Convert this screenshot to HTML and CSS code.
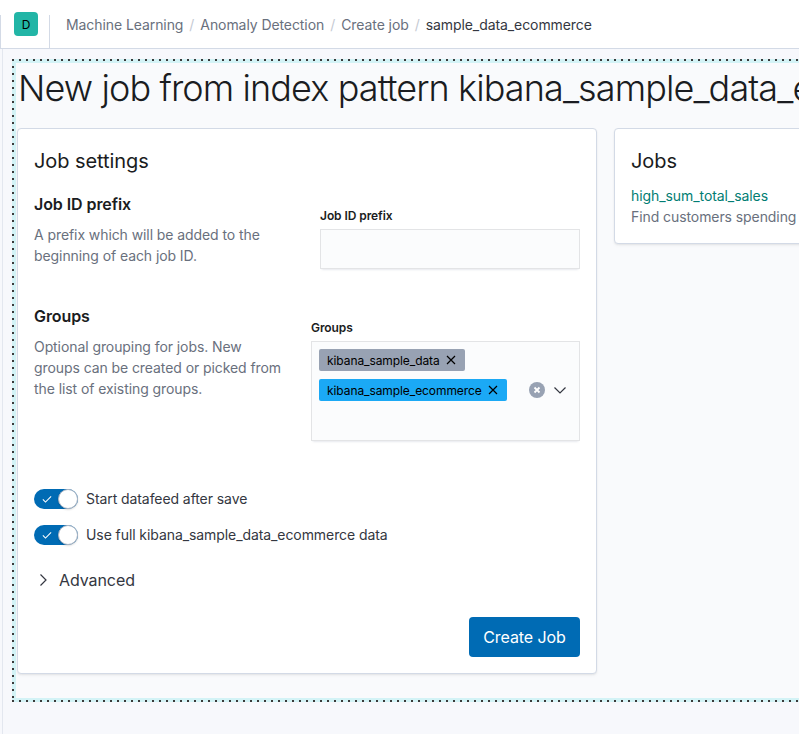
FILE: index.html
```html
<!DOCTYPE html>
<html>
<head>
<meta charset="utf-8">
<link rel="stylesheet" href="styles.css">
</head>
<body>
<div class="app">
  <header class="header">
    <div class="avatar-section"><span class="avatar">D</span></div>
    <nav class="crumbs">
      <span class="crumb">Machine Learning</span><span class="sep">/</span>
      <span class="crumb">Anomaly Detection</span><span class="sep">/</span>
      <span class="crumb">Create job</span><span class="sep">/</span>
      <span class="crumb last">sample_data_ecommerce</span>
    </nav>
  </header>
  <main class="main">
    <div class="focus-box">
      <div class="page">
        <h1 class="page-title">New job from index pattern kibana_sample_data_ecommerce</h1>
        <div class="cards">
          <section class="card settings">
            <h2 class="card-title">Job settings</h2>
            <div class="row row-first">
              <div class="desc">
                <h3 class="desc-title">Job ID prefix</h3>
                <p class="desc-text">A prefix which will be added to the<br>beginning of each job ID.</p>
              </div>
              <div class="field field-narrow">
                <label class="label">Job ID prefix</label>
                <div class="input"></div>
              </div>
            </div>
            <div class="row row-second">
              <div class="desc">
                <h3 class="desc-title">Groups</h3>
                <p class="desc-text">Optional grouping for jobs. New<br>groups can be created or picked from<br>the list of existing groups.</p>
              </div>
              <div class="field field-wide">
                <label class="label">Groups</label>
                <div class="combo">
                  <div class="tags">
                    <span class="tag tag-gray">kibana_sample_data<svg class="tag-x" viewBox="0 0 10 10"><path d="M1 1l8 8M9 1l-8 8"/></svg></span>
                    <span class="tag tag-cyan">kibana_sample_ecommerce<svg class="tag-x" viewBox="0 0 10 10"><path d="M1 1l8 8M9 1l-8 8"/></svg></span>
                  </div>
                  <div class="combo-icons">
                    <span class="clear"><svg viewBox="0 0 16 16"><path d="M5.5 5.5l5 5M10.5 5.5l-5 5"/></svg></span>
                    <svg class="chev-down" viewBox="0 0 16 16"><path d="M2.5 5.5L8 11l5.5-5.5"/></svg>
                  </div>
                </div>
              </div>
            </div>
            <div class="switch-row first-switch">
              <span class="switch"><svg class="check" viewBox="0 0 16 16"><path d="M2.5 8.5l3.5 3.5 7.5-7.5"/></svg><span class="knob"></span></span>
              <span class="switch-label">Start datafeed after save</span>
            </div>
            <div class="switch-row">
              <span class="switch"><svg class="check" viewBox="0 0 16 16"><path d="M2.5 8.5l3.5 3.5 7.5-7.5"/></svg><span class="knob"></span></span>
              <span class="switch-label">Use full kibana_sample_data_ecommerce data</span>
            </div>
            <div class="advanced">
              <svg class="chev-right" viewBox="0 0 16 16"><path d="M5.5 2.5L11 8l-5.5 5.5"/></svg>
              <span>Advanced</span>
            </div>
            <div class="actions">
              <button class="btn">Create Job</button>
            </div>
          </section>
          <section class="card jobs">
            <h2 class="card-title">Jobs</h2>
            <div class="job-name">high_sum_total_sales</div>
            <div class="job-desc">Find customers spending an unusually high amount in an hour</div>
          </section>
        </div>
      </div>
    </div>
  </main>
</div>
</body>
</html>
```
FILE: styles.css
```css
* { box-sizing: border-box; }
html, body { margin: 0; padding: 0; }
body {
  font-family: Inter, "Noto Sans", sans-serif;
  color: #343741;
  background: #F7F8FC;
  width: 799px;
  height: 734px;
  overflow: hidden;
  letter-spacing: -0.005em;
}
.app { width: 1400px; }
.header {
  height: 49px;
  background: #fff;
  border-bottom: 1px solid #D3DAE6;
  display: flex;
  align-items: center;
}
.avatar-section {
  width: 50px;
  height: 48px;
  display: flex;
  align-items: center;
  justify-content: center;
  background: linear-gradient(#D3DAE6, #D3DAE6) right 15px / 1px 33px no-repeat,
              linear-gradient(#D3DAE6, #D3DAE6) left 15px / 1px 33px no-repeat;
}
.avatar {
  width: 24px; height: 24px;
  border-radius: 4px;
  background: #22B5A6;
  color: #000;
  font-size: 12px;
  display: flex; align-items: center; justify-content: center;
  margin-left: 2px;
}
.crumbs {
  margin-left: 16px;
  font-size: 14px;
  display: flex;
  align-items: center;
  color: #69707D;
}
.sep { color: #C5CAD3; margin: 0 6px; }
.crumb.last { color: #343741; }

.main {
  margin-left: 2px;
  border-left: 1px solid #E3E7EF;
  padding: 10px 0 0 9px;
  height: 685px;
}
.focus-box {
  width: 1300px;
  padding: 4px;
  background:
    repeating-linear-gradient(90deg, #3a3a3a 0 2px, transparent 2px 7px) left top / 100% 2px no-repeat,
    repeating-linear-gradient(90deg, #3a3a3a 0 2px, transparent 2px 7px) left bottom / 100% 2px no-repeat,
    repeating-linear-gradient(180deg, #3a3a3a 0 2px, transparent 2px 7px) left top / 2px 100% no-repeat,
    repeating-linear-gradient(180deg, #3a3a3a 0 2px, transparent 2px 7px) right top / 2px 100% no-repeat,
    #D3F3F6;
}
.page {
  background: #F9FAFC;
  padding: 1px 0 24px 1px;
}
.page-title {
  margin: 0;
  font-size: 36px;
  font-weight: 300;
  line-height: 48px;
  letter-spacing: -0.025em;
  color: #1A1C21;
  white-space: nowrap;
  margin-left: 1px;
}
.cards {
  display: flex;
  align-items: flex-start;
  gap: 17px;
  margin-top: 16px;
}
.card {
  background: #fff;
  border: 1px solid #D3DAE6;
  border-radius: 4px;
  box-shadow: 0 1px 2px rgba(0,0,0,.06), 0 2px 4px -1px rgba(0,0,0,.05);
  padding: 16px;
}
.settings { width: 580px; flex: none; }
.jobs { width: 600px; flex: none; }
.card-title {
  margin: 0;
  font-size: 20px;
  font-weight: 400;
  line-height: 32px;
  color: #1A1C21;
}
.row { display: flex; align-items: flex-start; }
.row-first { margin-top: 15px; }
.row-second { margin-top: 35px; }
.desc { flex: 1; }
.desc-title {
  margin: 0;
  font-size: 16px;
  font-weight: 600;
  line-height: 24px;
  color: #1A1C21;
}
.desc-text {
  margin: 8px 0 0;
  font-size: 14px;
  line-height: 21px;
  color: #69707D;
}
.field { margin-top: 14.5px; flex: none; }
.field-narrow { width: 260px; }
.field-wide { width: 269px; }
.label {
  display: block;
  font-size: 12px;
  font-weight: 600;
  line-height: 18px;
  color: #1A1C21;
  margin-bottom: 4.5px;
}
.input {
  height: 40px;
  background: #FBFCFD;
  box-shadow: 0 1px 1px -1px rgba(152,162,179,.2), 0 3px 2px -2px rgba(152,162,179,.2), inset 0 0 0 1px rgba(16,22,26,.1);
}
.combo {
  height: 100px;
  background: #FBFCFD;
  box-shadow: 0 1px 1px -1px rgba(152,162,179,.2), 0 3px 2px -2px rgba(152,162,179,.2), inset 0 0 0 1px rgba(16,22,26,.1);
  display: flex;
  align-items: flex-start;
  padding: 8px;
}
.tags {
  flex: 1;
  display: flex;
  flex-direction: column;
  align-items: flex-start;
  gap: 8px;
}
.tag {
  height: 22px;
  display: inline-flex;
  align-items: center;
  padding: 0 9px 0 8px;
  border-radius: 2px;
  font-size: 12px;
  color: #000;
}
.tag-gray { background: #98A2B3; }
.tag-cyan { background: #1BA9F5; }
.tag-x {
  width: 10px; height: 10px;
  margin-left: 6px;
  fill: none; stroke: #000; stroke-width: 1.2;
}
.combo-icons {
  display: flex;
  align-items: center;
  height: 22px;
  margin-top: 30px;
  gap: 7px;
  margin-right: 4px;
}
.clear {
  width: 16px; height: 16px;
  border-radius: 50%;
  background: #98A2B3;
  display: flex; align-items: center; justify-content: center;
}
.clear svg { width: 16px; height: 16px; fill: none; stroke: #fff; stroke-width: 1.8; }
.chev-down { width: 16px; height: 16px; fill: none; stroke: #343741; stroke-width: 1.2; }

.switch-row {
  display: flex;
  align-items: center;
  height: 20px;
  margin-top: 16px;
}
.first-switch { margin-top: 48px; }
.switch {
  width: 44px; height: 20px;
  border-radius: 10px;
  background: #006BB4;
  display: flex;
  align-items: center;
  justify-content: space-between;
  flex: none;
}
.check { width: 12px; height: 12px; margin-left: 7px; fill: none; stroke: #fff; stroke-width: 1.4; }
.knob {
  width: 20px; height: 20px;
  border-radius: 50%;
  background: #fff;
  border: 1px solid #ADB6C4;
  box-shadow: 0 1px 2px rgba(0,0,0,.15);
}
.switch-label {
  margin-left: 8px;
  font-size: 14px;
  line-height: 20px;
  color: #343741;
}
.advanced {
  display: flex;
  align-items: center;
  height: 24px;
  margin-top: 23px;
  font-size: 16px;
  color: #343741;
}
.chev-right { width: 16px; height: 16px; margin-left: 1px; margin-right: 8px; fill: none; stroke: #343741; stroke-width: 1.2; }
.actions { display: flex; justify-content: flex-end; margin-top: 25px; }
.btn {
  height: 40px;
  width: 111px;
  border: none;
  border-radius: 4px;
  background: #006BB4;
  color: #fff;
  font-family: Inter, sans-serif;
  font-size: 16px;
  letter-spacing: -0.005em;
  padding: 0;
}
.job-name {
  margin-top: 8px;
  font-size: 14px;
  line-height: 21px;
  color: #017D73;
}
.job-desc {
  font-size: 14px;
  line-height: 21px;
  color: #69707D;
  white-space: nowrap;
}
```
